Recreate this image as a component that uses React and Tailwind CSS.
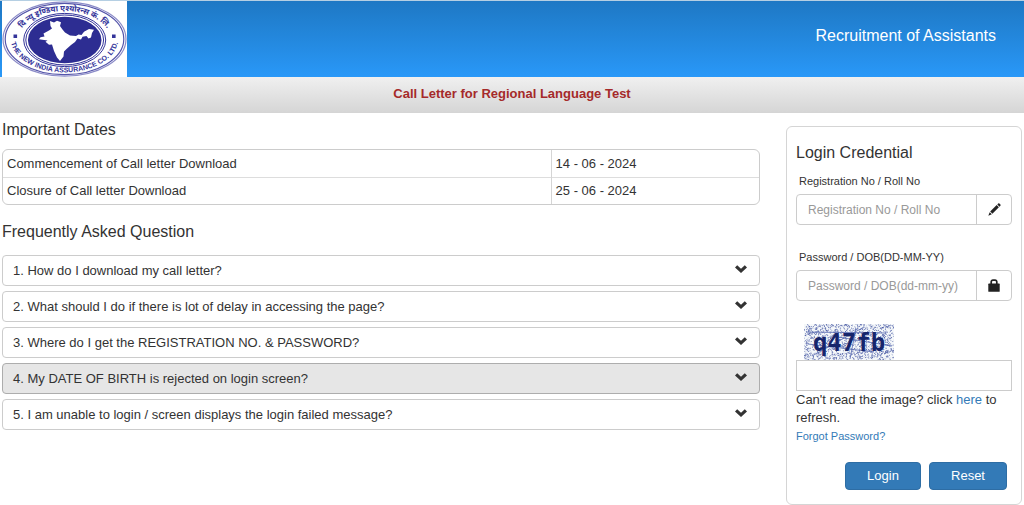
import { useState } from 'react'

const dates = [
    { label: 'Commencement of Call letter Download', value: '14 - 06 - 2024' },
    { label: 'Closure of Call letter Download', value: '25 - 06 - 2024' },
]

const questions = [
    'How do I download my call letter?',
    'What should I do if there is lot of delay in accessing the page?',
    'Where do I get the REGISTRATION NO. & PASSWORD?',
    'My DATE OF BIRTH is rejected on login screen?',
    'I am unable to login / screen displays the login failed message?',
]

const IconChevron = () => (
    <svg width='12' height='8' viewBox='0 0 12 8' fill='#333'>
        <path d='M2.2 0.3 L6 3.8 L9.8 0.3 L12 2.4 L6 8 L0 2.4 Z' />
    </svg>
)

const IconPencil = () => (
    <svg width='13' height='13' viewBox='0 0 13 13' fill='#222'>
        <path d='M10.2 0.6 a0.9 0.9 0 0 1 1.2 0 l1 1 a0.9 0.9 0 0 1 0 1.2 l-0.9 0.9 l-2.2 -2.2 Z' />
        <path d='M8.7 2.1 L10.9 4.3 L4.4 10.8 L2.2 8.6 Z' />
        <path d='M1.7 9.2 L3.8 11.3 L0.3 12.7 Z' />
    </svg>
)

const IconLock = () => (
    <svg width='12' height='13' viewBox='0 0 12 13'>
        <path d='M3.2 6 V3 A1.8 1.8 0 0 1 5 1.1 H7 A1.8 1.8 0 0 1 8.8 3 V6' fill='none' stroke='#222' strokeWidth='1.7' />
        <rect x='0.3' y='4.6' width='11.4' height='8.2' rx='0.6' fill='#222' />
    </svg>
)

const Logo = () => (
    <svg className='block' width='125' height='76' viewBox='0 0 125 76' role='img' aria-label='The New India Assurance Co. Ltd.'>
        <rect width='125' height='76' fill='#fff' />
        <g fill='none' stroke='#34349a'>
            <ellipse cx='62.5' cy='38' rx='61.5' ry='37.2' strokeWidth='1.2' stroke='#8c8cc8' />
            <ellipse cx='62.5' cy='38' rx='59.3' ry='35.6' strokeWidth='1.2' stroke='#5555aa' />
            <ellipse cx='62.7' cy='39' rx='41' ry='26.6' strokeWidth='1' />
            <ellipse cx='62.7' cy='39' rx='38.9' ry='25' strokeWidth='1' />
        </g>
        <ellipse cx='62.7' cy='39' rx='36.8' ry='23.2' fill='#2d2d92' />
        <path
            fill='#fff'
            d='M48 20 L52 21.4 L55 19.8 L59 21.2 L58 25 L60.5 28.5 L63 31.5 L68 34.5 L74 35 L76.5 33.5 L79.5 34 L82 30.8 L87 28 L92 28.8 L90 32 L89 36.5 L86.5 37.5 L84.5 35 L80.5 35.8 L79 38.5 L75.5 37.5 L73 41 L69 44 L64.5 48 L62 50.5 L61.5 55.5 L58 60 L55 56.5 L52 50 L50 43.5 L47 43.8 L43.5 40.8 L45.5 39.5 L37 38.3 L38.5 36.2 L42.5 35.5 L41.5 32.5 L47 29.5 L50 27.5 L48.5 25 Z'
        />
        <path id='ring-bottom' d='M8.5 37 A54 34.4 0 0 0 116.5 37' fill='none' />
        <path id='ring-top' d='M15.5 40 A47 30 0 0 1 109.5 40' fill='none' />
        <text fontFamily='Liberation Sans' fontWeight='bold' fontSize='7' fill='#34349a'>
            <textPath href='#ring-bottom' startOffset='50%' textAnchor='middle'>THE NEW INDIA ASSURANCE CO. LTD.</textPath>
        </text>
        <text fontFamily='Noto Sans, sans-serif' fontWeight='bold' fontSize='8' fill='#34349a'>
            <textPath href='#ring-top' startOffset='50%' textAnchor='middle'>दि न्यू इण्डिया एश्योरन्स कं. लि.</textPath>
        </text>
        <rect x='11.5' y='33.5' width='3.6' height='3.5' fill='#34349a' />
        <rect x='110' y='33.5' width='3.6' height='3.5' fill='#34349a' />
    </svg>
)

// same seed every time, so the speckles stay put between renders
const makeSpeckles = (count) => {
    let seed = 4711
    const next = () => {
        seed = (seed * 16807) % 2147483647
        return seed / 2147483647
    }
    return Array.from({ length: count }, () => {
        const x = next() * 90
        const y = next() * 36
        return `M${x.toFixed(1)} ${y.toFixed(1)}l${(next() * 3 - 1.5).toFixed(1)} ${(next() * 2.4 - 1.2).toFixed(1)}`
    }).join('')
}

const speckles = makeSpeckles(1200)

const Captcha = () => (
    <svg className='ml-2 block' width='90' height='36' viewBox='0 0 90 36' role='img' aria-label='Captcha'>
        <rect width='90' height='36' fill='#f5f8fa' />
        <path d={speckles} stroke='#4a5ba5' strokeWidth='0.8' fill='none' />
        <path d='M2 8 L82 9 M8 32 L60 3 M28 12 L88 22 M4 20 L70 28 M52 4 L46 35' stroke='#5063ad' strokeWidth='0.8' fill='none' />
        <text x='45' y='27' textAnchor='middle' fontFamily='DejaVu Sans Mono, monospace' fontWeight='bold' fontSize='24' fill='#16256b'>q47fb</text>
    </svg>
)

const Field = ({ id, label, placeholder, type, icon }) => (
    <div className='flex flex-col'>
        <label htmlFor={id} className='pl-[3px] text-[11px] leading-4'>{label}</label>
        <div className='mt-[5px] flex h-[31px] rounded-sm border border-[#ccc]'>
            <input id={id} type={type} placeholder={placeholder}
                className='min-w-0 flex-1 px-[11px] text-xs outline-none placeholder:text-[#999]' />
            <span className='flex w-[35px] items-center justify-center border-l border-[#ccc]'>{icon}</span>
        </div>
    </div>
)

const LoginForm = () => (
    <form className='flex flex-col rounded-md border border-[#d5d5d5] px-[9px] pt-4 pb-[14px]' onSubmit={e => e.preventDefault()}>
        <h2 className='mb-[10px] text-base leading-5'>Login Credential</h2>
        <div className='flex flex-col gap-6'>
            <Field id='roll' type='text' label='Registration No / Roll No' placeholder='Registration No / Roll No' icon={<IconPencil />} />
            <Field id='dob' type='password' label='Password / DOB(DD-MM-YY)' placeholder='Password / DOB(dd-mm-yy)' icon={<IconLock />} />
        </div>
        <div className='mt-[23px]'>
            <Captcha />
            <input type='text' aria-label='Captcha text' className='block h-[31px] w-full border border-[#ccc] px-2 outline-none' />
        </div>
        <p className='text-[13px] leading-[18px]'>
            Can't read the image? click <a href='#' className='text-[#337ab7]'>here</a> to refresh.
        </p>
        <a href='#' className='text-[11px] leading-[18px] text-[#337ab7]'>Forgot Password?</a>
        <div className='mt-[17px] flex justify-end gap-2 pr-[5px]'>
            <button type='submit' className='h-7 w-[76px] rounded-sm border border-[#2e6da4] bg-[#337ab7] text-[13px] text-white'>Login</button>
            <button type='reset' className='h-7 w-[78px] rounded-sm border border-[#2e6da4] bg-[#337ab7] text-[13px] text-white'>Reset</button>
        </div>
    </form>
)

export default function App() {
    const [active, setActive] = useState(3)

    return (
        <div className="bg-white font-['Liberation_Sans',Arial,sans-serif] text-[13px] text-[#333]">
            <header className='flex items-center justify-between border-t border-[#b5cfe3] bg-linear-to-b from-[#1e78c4] to-[#2998f8] pr-7 pl-0.5'>
                <Logo />
                <span className='pb-[6px] text-base text-white'>Recruitment of Assistants</span>
            </header>
            <div className='flex h-9 items-center justify-center border-b border-[#d5d5d5] bg-linear-to-b from-[#f0f0f0] to-[#d6d6d6] pb-0.5'>
                <h1 className='text-[13px] font-bold text-[#a52a2a]'>Call Letter for Regional Language Test</h1>
            </div>

            <div className='flex items-start gap-[26px] px-0.5'>
                <main className='flex-1 pt-[7px]'>
                    <h2 className='text-base leading-5'>Important Dates</h2>
                    <div className='mt-[9px] overflow-hidden rounded-md border border-[#ccc]'>
                        <table className='w-full border-collapse'>
                            <tbody>
                                {dates.map((d, i) => (
                                    <tr key={d.label} className={i > 0 ? 'border-t border-[#ddd]' : ''}>
                                        <td className='h-[27px] w-[72.5%] border-r border-[#d5d5d5] px-1'>{d.label}</td>
                                        <td className='h-[27px] px-1'>{d.value}</td>
                                    </tr>
                                ))}
                            </tbody>
                        </table>
                    </div>

                    <h2 className='mt-[17px] text-base leading-5'>Frequently Asked Question</h2>
                    <div className='mt-[13px] flex flex-col gap-[5px]'>
                        {questions.map((q, i) => (
                            <button key={q} type='button' onClick={() => setActive(i)}
                                className={`flex h-[31px] items-center justify-between rounded-sm border pr-3 pl-[10px] text-left ${active === i ? 'border-[#adadad] bg-[#e6e6e6]' : 'border-[#ccc] bg-white'}`}>
                                <span>{i + 1}. {q}</span>
                                <span className='pb-1'><IconChevron /></span>
                            </button>
                        ))}
                    </div>
                </main>

                <aside className='w-[236px] pt-[13px]'>
                    <LoginForm />
                </aside>
            </div>
        </div>
    )
}
